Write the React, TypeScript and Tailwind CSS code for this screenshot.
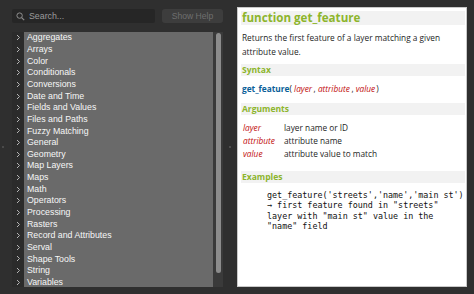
import React from "react";

const groups = [
  "Aggregates",
  "Arrays",
  "Color",
  "Conditionals",
  "Conversions",
  "Date and Time",
  "Fields and Values",
  "Files and Paths",
  "Fuzzy Matching",
  "General",
  "Geometry",
  "Map Layers",
  "Maps",
  "Math",
  "Operators",
  "Processing",
  "Rasters",
  "Record and Attributes",
  "Serval",
  "Shape Tools",
  "String",
  "Variables",
];

const args = [
  { name: "layer", desc: "layer name or ID" },
  { name: "attribute", desc: "attribute name" },
  { name: "value", desc: "attribute value to match" },
];

const Chevron = () => (
  <svg width="5" height="7" viewBox="0 0 5 7">
    <path d="M1 1l2.5 2.5L1 6" fill="none" stroke="#b5b5b5" strokeWidth="1" />
  </svg>
);

const Band = ({ children, big }: { children: React.ReactNode; big?: boolean }) => (
  <div
    className={
      "flex items-center bg-[#f2f2f2] px-[1px] font-bold leading-none text-[#8db52c] " +
      (big ? "h-[14px] text-[11.6px]" : "h-[12px] text-[8.5px]")
    }
  >
    {children}
  </div>
);

const App = () => {
  return (
    <div
      className="flex h-[294px] w-[474px] overflow-hidden bg-[#2f2f2f]"
      style={{ fontFamily: '"Liberation Sans", Arial, sans-serif' }}
    >
      {/* left splitter */}
      <div className="flex w-[5px] items-center justify-center">
        <div className="h-[2px] w-[2px] rounded-full bg-[#555]" />
      </div>

      {/* left pane */}
      <div className="w-[218px] pl-[7px] pt-[9px]">
        <div className="flex h-[14px] gap-[7px]">
          <div className="flex w-[143px] items-center gap-[4px] rounded-[2px] bg-[#262626] pl-[4px]">
            <svg width="9" height="9" viewBox="0 0 9 9">
              <circle cx="3.6" cy="3.6" r="2.7" fill="none" stroke="#8e8e8e" strokeWidth="1" />
              <path d="M5.6 5.6L8.2 8.2" stroke="#8e8e8e" strokeWidth="1.2" />
            </svg>
            <span className="text-[8.8px] leading-none text-[#9c9c9c]">Search...</span>
          </div>
          <div className="flex w-[61px] items-center justify-center rounded-[3px] bg-[#3d3d3d] text-[8.6px] leading-none text-[#6f6f6f]">
            Show Help
          </div>
        </div>

        <div className="mt-[9px] flex h-[255px] w-[211px] bg-[#262626]">
          <div className="w-[12px] bg-[#2b2b2b]">
            {groups.map((g) => (
              <div key={g} className="flex h-[11.65px] items-center justify-center">
                <Chevron />
              </div>
            ))}
          </div>
          <div className="w-[189px] bg-[#6a6a6a]">
            {groups.map((g) => (
              <div
                key={g}
                className="flex h-[11.65px] items-center pl-[3px] text-[8.8px] leading-none text-[#f7f7f7]"
              >
                {g}
              </div>
            ))}
          </div>
          <div className="w-[10px] bg-[#3a3a3a] pl-[3px] pr-[2px] pt-[1px]">
            <div className="h-[240px] w-[5px] rounded-full bg-[#8c8c8c]" />
          </div>
        </div>
      </div>

      {/* middle splitter */}
      <div className="flex w-[14px] items-center justify-center">
        <div className="h-[2px] w-[2px] rounded-full bg-[#5a5a5a]" />
      </div>

      {/* help pane */}
      <div
        className="mt-[7px] h-[280px] w-[230px] border border-[#c9c9c9] bg-white pl-[3px] pr-[1px] pt-[3px] text-[#1e1e1e]"
        style={{ fontFamily: '"Open Sans", "Liberation Sans", sans-serif' }}
      >
        <Band big>function get_feature</Band>
        <p className="mt-[6px] pl-[1px] text-[8.3px] leading-[14px]">
          Returns the first feature of a layer matching a given
          <br />
          attribute value.
        </p>
        <div className="mt-[5px]">
          <Band>Syntax</Band>
        </div>
        <div className="mt-[6px] pl-[1px] text-[8.3px] leading-[13px]">
          <span className="font-bold text-[#0a6099]">get_feature</span>
          <span>( </span>
          <span className="mr-[1.5px] italic text-[#bf0c0c]">layer</span>
          <span>, </span>
          <span className="mr-[1.5px] italic text-[#bf0c0c]">attribute</span>
          <span>, </span>
          <span className="mr-[1px] italic text-[#bf0c0c]">value</span>
          <span>)</span>
        </div>
        <div className="mt-[8px]">
          <Band>Arguments</Band>
        </div>
        <div className="mt-[6px] pl-[2px] text-[8.3px] leading-[13px]">
          {args.map((a) => (
            <div key={a.name} className="flex">
              <span className="w-[41px] italic text-[#bf0c0c]">{a.name}</span>
              <span>{a.desc}</span>
            </div>
          ))}
        </div>
        <div className="mt-[11px]">
          <Band>Examples</Band>
        </div>
        <pre
          className="mt-[7px] pl-[26px] text-[8.4px] leading-[10.4px] text-[#111]"
          style={{ fontFamily: '"DejaVu Sans Mono", "Liberation Mono", monospace' }}
        >
          {"get_feature('streets','name','main st')\n\u2192 first feature found in \"streets\"\nlayer with \"main st\" value in the\n\"name\" field"}
        </pre>
      </div>
    </div>
  );
};

export default App;
